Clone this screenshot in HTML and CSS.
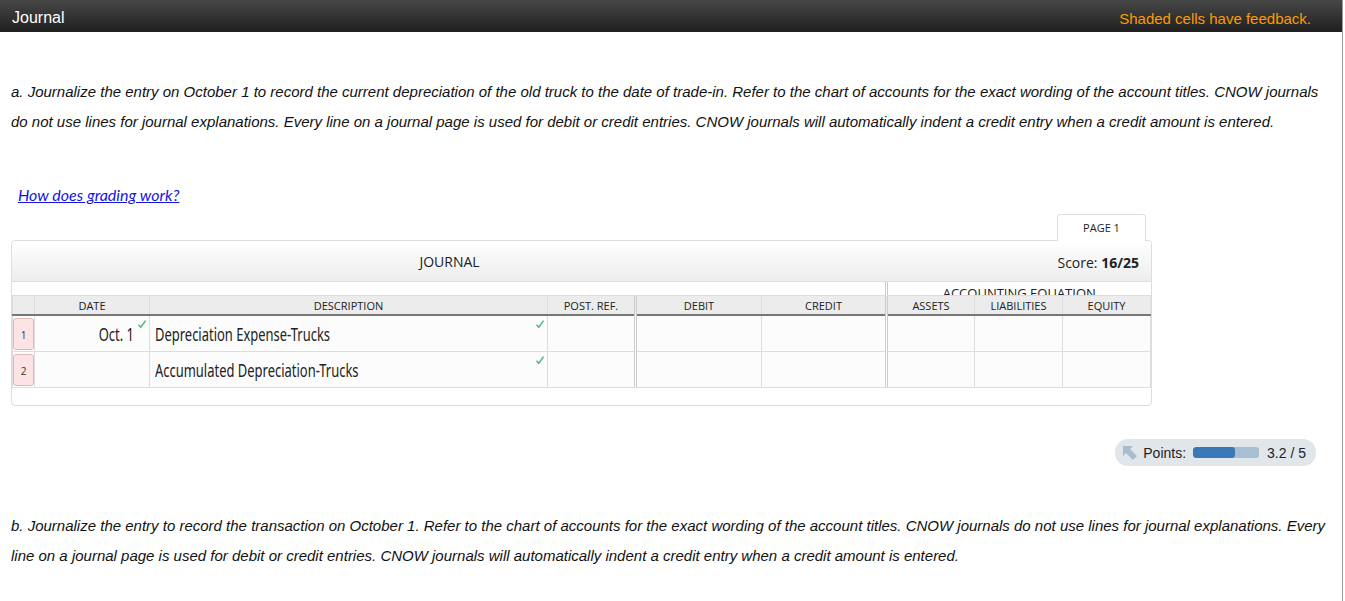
FILE: index.html
```html
<!DOCTYPE html>
<html lang="en">
<head>
    <meta charset="UTF-8">
    <meta name="viewport" content="width=device-width, initial-scale=1.0">
    <title>Journal</title>
    <link rel="stylesheet" href="styles.css">
</head>
<body>
<div class="page">

    <div class="topbar">
        <span class="topbar-title">Journal</span>
        <span class="topbar-note">Shaded cells have feedback.</span>
    </div>

    <p class="prompt">a. Journalize the entry on October 1 to record the current depreciation of the old truck to the date of trade-in. Refer to the chart of accounts for the exact wording of the account titles. CNOW journals do not use lines for journal explanations. Every line on a journal page is used for debit or credit entries. CNOW journals will automatically indent a credit entry when a credit amount is entered.</p>

    <div class="grading"><a href="#">How does grading work?</a></div>

    <div class="journal-wrap">
        <div class="tabs"><div class="tab">PAGE 1</div></div>

        <div class="journal">
            <div class="journal-head">
                <div class="journal-title">JOURNAL</div>
                <div class="score">Score: <b>16/25</b></div>
            </div>

            <table class="jtable">
                <colgroup>
                    <col class="c-num">
                    <col class="c-date">
                    <col class="c-desc">
                    <col class="c-ref">
                    <col class="c-debit">
                    <col class="c-credit">
                    <col class="c-eq">
                    <col class="c-eq">
                    <col class="c-eq">
                </colgroup>
                <tr class="gap-row">
                    <td colspan="6"></td>
                    <td colspan="3" class="dbl"><div class="eq-label">ACCOUNTING EQUATION</div></td>
                </tr>
                <tr class="head-row">
                    <th></th>
                    <th>DATE</th>
                    <th>DESCRIPTION</th>
                    <th>POST. REF.</th>
                    <th class="dbl">DEBIT</th>
                    <th>CREDIT</th>
                    <th class="dbl">ASSETS</th>
                    <th>LIABILITIES</th>
                    <th>EQUITY</th>
                </tr>
                <tr class="entry">
                    <td class="num"><span>1</span></td>
                    <td class="date"><span class="cond">Oct. 1</span>
                        <svg class="check" viewBox="0 0 10 10"><path d="M1.5 5.8 L3.8 8.2 L8.6 1.6" /></svg>
                    </td>
                    <td class="desc"><span class="cond">Depreciation Expense-Trucks</span>
                        <svg class="check" viewBox="0 0 10 10"><path d="M1.5 5.8 L3.8 8.2 L8.6 1.6" /></svg>
                    </td>
                    <td></td>
                    <td class="dbl"></td>
                    <td></td>
                    <td class="dbl"></td>
                    <td></td>
                    <td></td>
                </tr>
                <tr class="entry">
                    <td class="num"><span>2</span></td>
                    <td class="date"></td>
                    <td class="desc"><span class="cond">Accumulated Depreciation-Trucks</span>
                        <svg class="check" viewBox="0 0 10 10"><path d="M1.5 5.8 L3.8 8.2 L8.6 1.6" /></svg>
                    </td>
                    <td></td>
                    <td class="dbl"></td>
                    <td></td>
                    <td class="dbl"></td>
                    <td></td>
                    <td></td>
                </tr>
            </table>
        </div>
    </div>

    <div class="points-row">
        <div class="points">
            <svg class="points-icon" viewBox="0 0 14 14">
                <polygon points="0,0 10,0 7,3 14,10 10,14 3,7 0,10" />
            </svg>
            <span>Points:</span>
            <span class="bar"><span class="bar-fill" style="width: 64%"></span></span>
            <span>3.2 / 5</span>
        </div>
    </div>

    <p class="prompt prompt-b">b. Journalize the entry to record the transaction on October 1. Refer to the chart of accounts for the exact wording of the account titles. CNOW journals do not use lines for journal explanations. Every line on a journal page is used for debit or credit entries. CNOW journals will automatically indent a credit entry when a credit amount is entered.</p>

</div>
</body>
</html>
```

FILE: styles.css
```css
body {
    margin: 0;
    font-family: "Liberation Sans", Arial, sans-serif;
    color: #222;
    background: #fff;
}

.page {
    width: 1343px;
    min-height: 601px;
    border-right: 1px solid #999;
    box-sizing: border-box;
}

.topbar {
    height: 32px;
    background: linear-gradient(#474747, #1f1f1f);
    display: flex;
    align-items: center;
    justify-content: space-between;
    padding: 4px 31px 0 12px;
    box-sizing: border-box;
}

.topbar-title {
    color: #fff;
    font-size: 16px;
}

.topbar-note {
    color: #ff9900;
    font-size: 15px;
}

.prompt {
    margin: 45px 0 0 0;
    padding: 0 10px 0 11px;
    font-size: 15px;
    font-style: italic;
    line-height: 30px;
    color: #111;
}

.grading {
    margin-top: 48px;
    padding-left: 18px;
    line-height: 20px;
    font-family: Lato, sans-serif;
    font-style: italic;
    font-size: 16px;
}

.grading a {
    color: #1414e6;
}

.journal-wrap {
    margin: 9px 0 0 11px;
    width: 1141px;
}

.tabs {
    display: flex;
    justify-content: flex-end;
    padding-right: 6px;
}

.tab {
    width: 89px;
    height: 27px;
    box-sizing: border-box;
    border: 1px solid #ddd;
    border-bottom: none;
    border-radius: 4px 4px 0 0;
    background: #fff;
    font-family: "Open Sans", sans-serif;
    font-size: 11px;
    text-align: center;
    line-height: 26px;
    margin-bottom: -1px;
    position: relative;
}

.journal {
    border: 1px solid #ddd;
    border-radius: 4px;
    height: 166px;
    box-sizing: border-box;
}

.journal-head {
    height: 40px;
    background: linear-gradient(#fff, #ededed);
    border-bottom: 1px solid #ddd;
    border-radius: 4px 4px 0 0;
    display: flex;
    align-items: center;
    font-family: "Open Sans", sans-serif;
    font-size: 14px;
    color: #222;
}

.journal-title {
    width: 875px;
    text-align: center;
}

.score {
    flex: 1;
    text-align: right;
    padding-right: 12px;
    padding-top: 2px;
}

.jtable {
    border-collapse: collapse;
    table-layout: fixed;
    width: 1139px;
    font-family: "Open Sans", sans-serif;
}

.c-num { width: 22px; }
.c-date { width: 115px; }
.c-desc { width: 398px; }
.c-ref { width: 88px; }
.c-debit { width: 126px; }
.c-credit { width: 125px; }
.c-eq { width: 88px; }

.jtable td, .jtable th {
    border: 1px solid #ddd;
    padding: 0;
}

.gap-row td {
    height: 13px;
    border-top: none;
    border-bottom: none;
    border-left: none;
    border-right: none;
}

.gap-row td.dbl {
    border-left: 3px double #ccc;
}

.eq-label {
    height: 13px;
    overflow: hidden;
    text-align: center;
    font-size: 13px;
    line-height: 13px;
    padding-top: 5px;
    box-sizing: border-box;
    color: #222;
}

.head-row th {
    height: 18px;
    background: #ececec;
    font-weight: normal;
    font-size: 11px;
    color: #222;
    border-bottom: 2px solid #777;
}

.jtable .dbl {
    border-left: 3px double #ccc;
}

.entry td {
    height: 33px;
    background: #fcfcfc;
    position: relative;
    font-family: "Noto Sans", sans-serif;
    font-size: 18px;
    color: #222;
    vertical-align: middle;
    white-space: nowrap;
}

.cond {
    display: inline-block;
    transform: scaleX(0.72);
    transform-origin: left center;
}

.date .cond {
    transform-origin: right center;
}

.entry td.num {
    padding: 1px 0;
    background: #fff;
}

.num span {
    display: block;
    height: 32px;
    line-height: 32px;
    background: #fde3e4;
    border: 1px solid #e3b7b9;
    border-radius: 3px;
    box-sizing: border-box;
    text-align: center;
    font-family: "Open Sans", sans-serif;
    font-size: 10px;
    color: #333;
}

.entry td.date {
    text-align: right;
    padding-right: 15px;
}

.entry td.desc {
    padding-left: 5px;
}

.check {
    position: absolute;
    top: 3px;
    right: 2px;
    width: 10px;
    height: 10px;
    fill: none;
    stroke: #55b985;
    stroke-width: 1.6;
}

.points-row {
    display: flex;
    justify-content: flex-end;
    padding-right: 26px;
    margin-top: 33px;
}

.points {
    display: flex;
    align-items: center;
    gap: 7px;
    height: 27px;
    padding: 0 10px 0 8px;
    background: #e0e6ea;
    border-radius: 13px;
    font-size: 14px;
    color: #222;
}

.points-icon {
    width: 14px;
    height: 14px;
    fill: #a9bccb;
    margin-right: -1px;
}

.bar {
    display: block;
    width: 66px;
    height: 11px;
    background: #a8bfd2;
    border-radius: 3px;
    overflow: hidden;
    margin-right: 1px;
}

.bar-fill {
    display: block;
    height: 100%;
    background: #3b78b8;
    border-radius: 3px;
}

.prompt-b {
    margin-top: 45px;
}
```
